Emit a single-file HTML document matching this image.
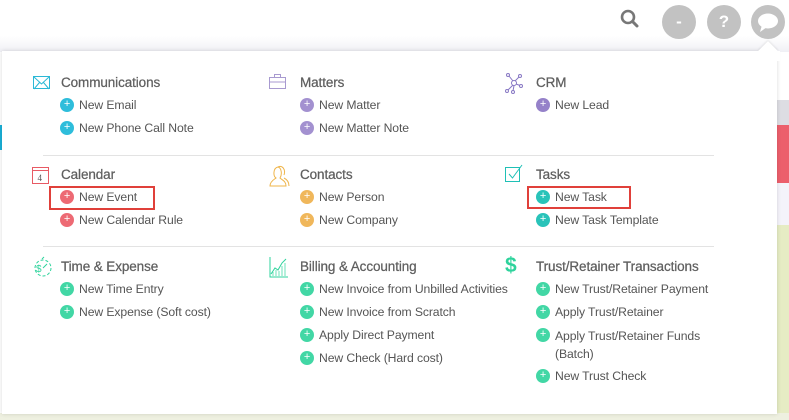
<!DOCTYPE html>
<html><head><meta charset="utf-8"><style>
*{margin:0;padding:0;box-sizing:border-box}
body{width:789px;height:420px;overflow:hidden;position:relative;background:#fff;font-family:"Liberation Sans",Arial,sans-serif;color:#555}
.abs{position:absolute}
.panel{position:absolute;left:2px;top:51px;width:775px;height:363px;background:#fff;box-shadow:0 0 4px rgba(0,0,0,.15)}
.h{position:absolute;font-size:13.5px;font-weight:normal;color:#5f5f5f;line-height:16px;letter-spacing:-.1px;-webkit-text-stroke:.25px #5f5f5f}
.it{position:absolute;font-size:12.2px;color:#555;line-height:16px;padding-left:19px;white-space:nowrap;letter-spacing:-.1px}
.it:before{content:"+";position:absolute;left:0;top:1px;width:14px;height:14px;border-radius:50%;background:var(--c);color:#fff;font-size:11px;line-height:13px;text-align:center;opacity:.9}
.hr{position:absolute;left:43px;width:671px;height:1px;background:#e3e3e3}
.circ{position:absolute;top:5px;width:34px;height:34px;border-radius:50%;background:#c2c2c2;color:#fff;text-align:center;font-weight:bold;font-size:17px;line-height:34px}
.box{position:absolute;border:2px solid #e0403a}
</style></head><body>
<div class="abs" style="left:0;top:36px;width:789px;height:16px;background:linear-gradient(#fff,#f0f0f5)"></div>
<div class="abs" style="left:0;top:125px;width:3px;height:25px;background:#1ab0d8"></div>
<div class="abs" style="left:776px;top:100px;width:13px;height:25px;background:#dddde3"></div>
<div class="abs" style="left:776px;top:125px;width:13px;height:58px;background:#ec5f6c"></div>
<div class="abs" style="left:776px;top:183px;width:13px;height:42px;background:#f4f3fa"></div>
<div class="abs" style="left:776px;top:225px;width:13px;height:195px;background:#e6ecc4"></div>
<div class="abs" style="left:0;top:413px;width:789px;height:7px;background:#eef0e0"></div>

<svg class="abs" style="left:619px;top:8px" width="22" height="22" viewBox="0 0 22 22"><circle cx="9" cy="9" r="6" fill="none" stroke="#777" stroke-width="2.6"/><line x1="13.5" y1="13.5" x2="18" y2="18" stroke="#777" stroke-width="3" stroke-linecap="round"/></svg>
<div class="circ" style="left:662px">-</div>
<div class="circ" style="left:707px">?</div>
<div class="circ" style="left:751px"><svg width="34" height="34" viewBox="0 0 34 34"><ellipse cx="17" cy="16" rx="10" ry="7.5" fill="#fff"/><path d="M11 20 L9 27 L16 22Z" fill="#fff"/></svg></div>

<div class="panel"></div>
<div class="abs" style="left:761px;top:44px;width:14px;height:14px;background:#fff;transform:rotate(45deg);box-shadow:-1px -1px 2px rgba(0,0,0,.08)"></div>
<div class="abs" style="left:750px;top:51px;width:30px;height:10px;background:#fff"></div>

<!-- icons -->
<svg class="abs" style="left:33px;top:76px" width="18" height="14"><rect x=".5" y=".5" width="16" height="12" fill="none" stroke="#2bb8d6"/><path d="M1 1 L8.5 8 L16 1 M1 13 L6.5 6.5 M16 13 L10.5 6.5" fill="none" stroke="#2bb8d6"/></svg>
<svg class="abs" style="left:269px;top:74px" width="18" height="16"><rect x=".5" y="3.5" width="16" height="11" fill="none" stroke="#a89ad0"/><rect x="5.5" y=".5" width="6" height="3" fill="none" stroke="#a89ad0"/><line x1="1" y1="8" x2="16" y2="8" stroke="#a89ad0"/></svg>
<svg class="abs" style="left:505px;top:72px" width="18" height="22"><g fill="none" stroke="#8878c4"><circle cx="9" cy="11" r="2.5"/><circle cx="3" cy="3" r="1.5"/><circle cx="15" cy="4" r="1.5"/><circle cx="2" cy="19" r="1.5"/><circle cx="8" cy="20" r="1.5"/><circle cx="16" cy="14" r="1.5"/><path d="M4 4L8 9M14 5L10 9M3 18L8 13M8 19L9 13.5M15 13.5L11 12"/></g></svg>
<svg class="abs" style="left:32px;top:165px" width="18" height="20"><rect x=".5" y="2.5" width="16" height="16" fill="none" stroke="#e85a64"/><line x1="1" y1="5.5" x2="16" y2="5.5" stroke="#e85a64"/><text x="5.5" y="16" font-size="9" fill="#555" font-family="Liberation Serif">4</text></svg>
<svg class="abs" style="left:268px;top:165px" width="22" height="22"><path d="M2 21 C2 16 7 14 8 13 C5 11 5 3 10 2 C14 3 14 10 12 13 C14 15 18 16 18 21Z M10 2 C14 0 18 4 16 10 M16 13 C18 14 21 16 21 21" fill="none" stroke="#efb54a"/></svg>
<svg class="abs" style="left:505px;top:164px" width="20" height="20"><rect x=".5" y="3.5" width="14" height="14" fill="none" stroke="#1fc0b6"/><path d="M4 10 L7.5 14 L17 1" fill="none" stroke="#1fc0b6"/></svg>
<svg class="abs" style="left:32px;top:256px" width="20" height="22"><circle cx="11" cy="12" r="8" fill="none" stroke="#2ed39c" stroke-dasharray="3 2"/><text x="4" y="16" font-size="10" fill="#2ed39c">$</text><path d="M10 3 L12 1 M11 12 L15 8" stroke="#2ed39c"/></svg>
<svg class="abs" style="left:269px;top:256px" width="20" height="22"><path d="M1 1 V21 H19 M2 18 L6 12 L9 14 L13 7 L17 3" fill="none" stroke="#2ed39c"/><path d="M4 20V16M7 20V14M10 20V15M13 20V10M16 20V7" stroke="#2ed39c" stroke-width=".7"/></svg>
<div class="abs" style="left:505px;top:254px;font-size:21px;font-weight:bold;color:#2ed39c">$</div>

<div class="h" style="left:61px;top:75px">Communications</div>
<div class="h" style="left:300px;top:75px">Matters</div>
<div class="h" style="left:536px;top:75px">CRM</div>
<div class="it" style="--c:#18b6d8;left:60px;top:97px">New Email</div>
<div class="it" style="--c:#18b6d8;left:60px;top:120px">New Phone Call Note</div>
<div class="it" style="--c:#9a86cc;left:300px;top:97px">New Matter</div>
<div class="it" style="--c:#9a86cc;left:300px;top:120px">New Matter Note</div>
<div class="it" style="--c:#8a74c4;left:536px;top:97px">New Lead</div>
<div class="hr" style="top:155px"></div>

<div class="h" style="left:61px;top:167px">Calendar</div>
<div class="h" style="left:300px;top:167px">Contacts</div>
<div class="h" style="left:536px;top:167px">Tasks</div>
<div class="it" style="--c:#ec5a65;left:60px;top:189px">New Event</div>
<div class="it" style="--c:#ec5a65;left:60px;top:212px">New Calendar Rule</div>
<div class="it" style="--c:#efb04a;left:300px;top:189px">New Person</div>
<div class="it" style="--c:#efb04a;left:300px;top:212px">New Company</div>
<div class="it" style="--c:#12bdb2;left:536px;top:189px">New Task</div>
<div class="it" style="--c:#12bdb2;left:536px;top:212px">New Task Template</div>
<div class="box" style="left:49px;top:186px;width:106px;height:24px"></div>
<div class="box" style="left:527px;top:186px;width:104px;height:23px"></div>
<div class="hr" style="top:246px"></div>

<div class="h" style="left:61px;top:259px">Time &amp; Expense</div>
<div class="h" style="left:300px;top:259px">Billing &amp; Accounting</div>
<div class="h" style="left:536px;top:259px">Trust/Retainer Transactions</div>
<div class="it" style="--c:#2ed39c;left:60px;top:281px">New Time Entry</div>
<div class="it" style="--c:#2ed39c;left:60px;top:304px">New Expense (Soft cost)</div>
<div class="it" style="--c:#2ed39c;left:300px;top:281px">New Invoice from Unbilled Activities</div>
<div class="it" style="--c:#2ed39c;left:300px;top:304px">New Invoice from Scratch</div>
<div class="it" style="--c:#2ed39c;left:300px;top:327px">Apply Direct Payment</div>
<div class="it" style="--c:#2ed39c;left:300px;top:350px">New Check (Hard cost)</div>
<div class="it" style="--c:#2ed39c;left:536px;top:281px">New Trust/Retainer Payment</div>
<div class="it" style="--c:#2ed39c;left:536px;top:304px">Apply Trust/Retainer</div>
<div class="it" style="--c:#2ed39c;left:536px;top:327px;line-height:18px">Apply Trust/Retainer Funds<br>(Batch)</div>
<div class="it" style="--c:#2ed39c;left:536px;top:368px">New Trust Check</div>
</body></html>
